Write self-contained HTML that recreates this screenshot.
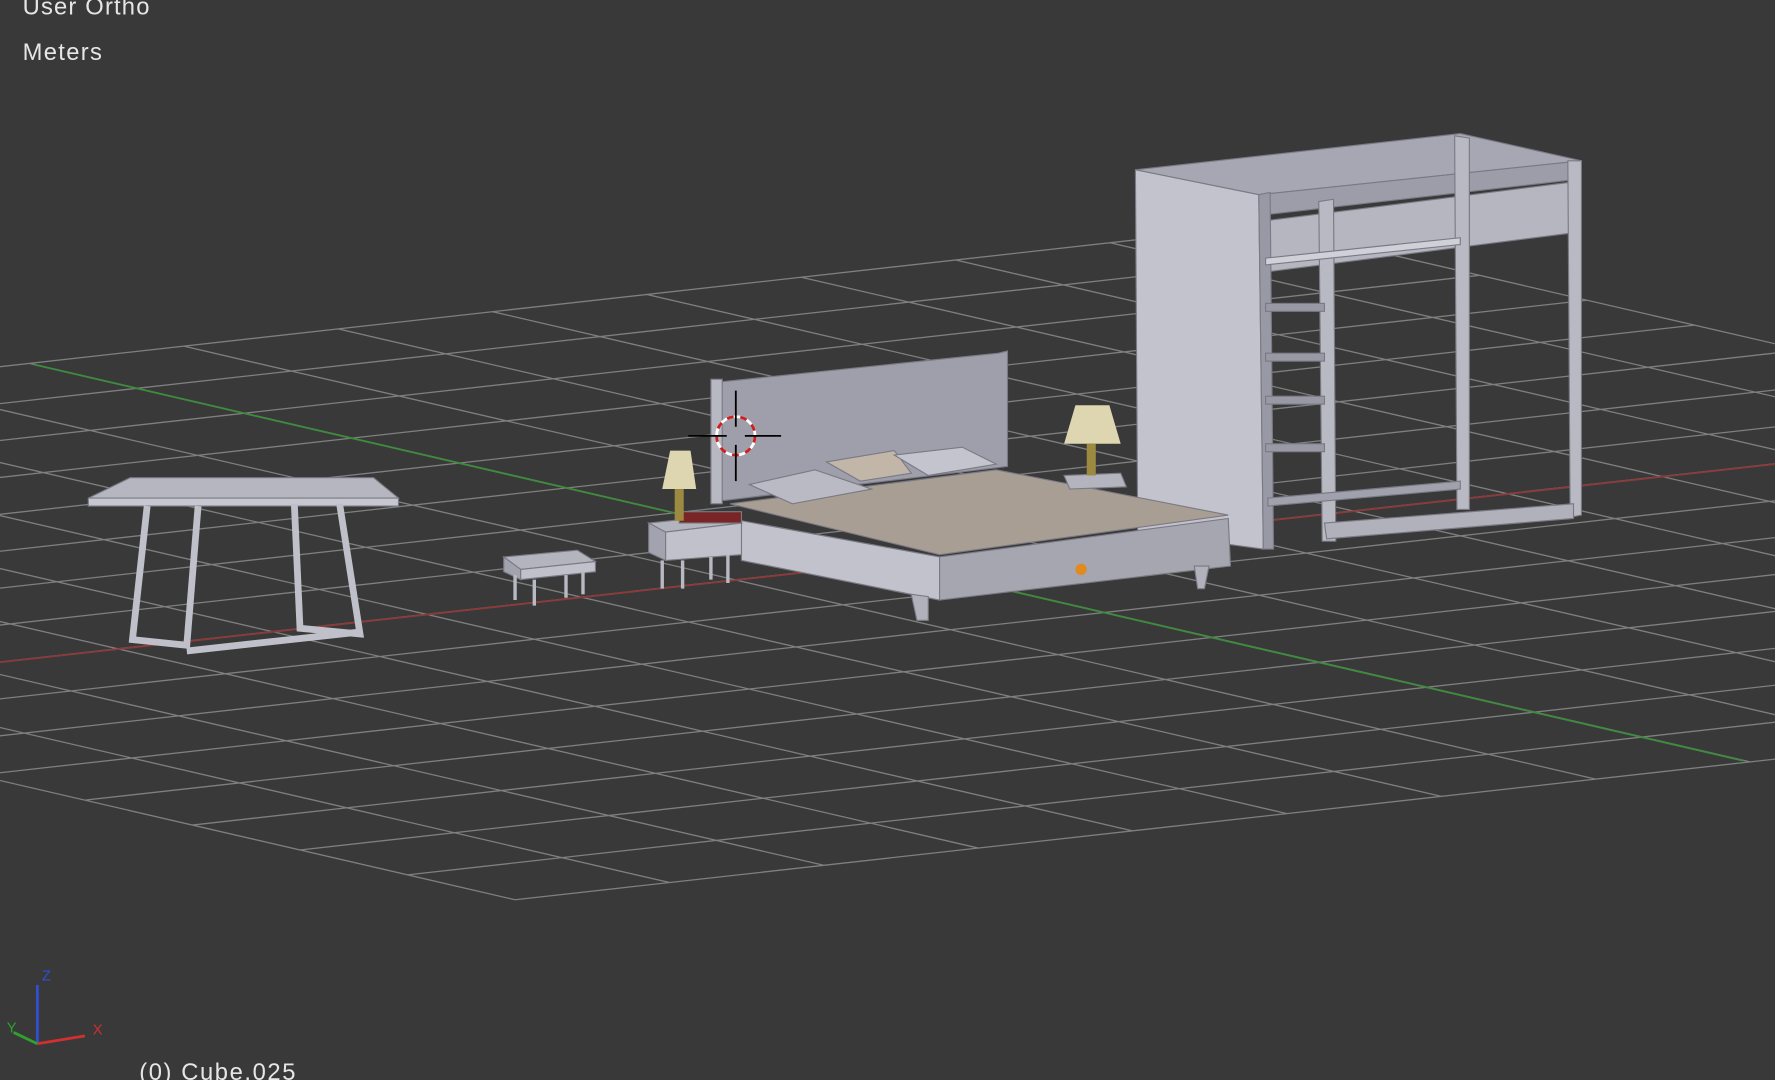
<!DOCTYPE html>
<html><head><meta charset="utf-8"><style>
html,body{margin:0;padding:0;background:#393939;overflow:hidden}
svg{display:block}
</style></head><body>
<svg width="1775" height="1080" viewBox="0 0 1568 954" preserveAspectRatio="none" xmlns="http://www.w3.org/2000/svg">
<rect width="1568" height="954" fill="#393939"/>
<g transform="matrix(136.375,-15.225,95,22,786,497)">
<path fill="none" stroke="#7f7f7f" stroke-width="1.3" vector-effect="non-scaling-stroke" d="
M-8,-8V8 M-7,-8V8 M-6,-8V8 M-5,-8V8 M-4,-8V8 M-3,-8V8 M-2,-8V8 M-1,-8V8 M0,-8V8 M1,-8V8 M2,-8V8 M3,-8V8 M4,-8V8 M5,-8V8 M6,-8V8 M7,-8V8 M8,-8V8
M-8,-8H8 M-8,-7H8 M-8,-6H8 M-8,-5H8 M-8,-4H8 M-8,-3H8 M-8,-2H8 M-8,-1H8 M-8,0H8 M-8,1H8 M-8,2H8 M-8,3H8 M-8,4H8 M-8,5H8 M-8,6H8 M-8,7H8 M-8,8H8"/>
</g>
<line x1="0" y1="585" x2="1568" y2="410" stroke="#8a3a3a" stroke-width="1.6"/>
<line x1="30" y1="322" x2="1540" y2="672" stroke="#3f8a3f" stroke-width="1.6"/>

<!-- loft bed / wardrobe -->
<g stroke="#7a7a85" stroke-width="1">
<polygon points="1003,150 1290,118 1397,142 1112,172" fill="#a6a7b2"/>
<polygon points="1112,172 1397,142 1397,158 1115,190" fill="#9c9da8"/>
<polygon points="1118,195 1395,160 1395,205 1120,240" fill="#b5b6c0"/>
<polygon points="1003,150 1112,172 1116,485 1005,470" fill="#c2c3cc"/>
<polygon points="1112,172 1122,170 1125,485 1116,485" fill="#9899a4"/>
<polygon points="1165,178 1178,176 1180,478 1168,478" fill="#b8b9c2"/>
<polygon points="1285,120 1298,122 1298,450 1287,450" fill="#b8b9c2"/>
<polygon points="1385,142 1397,142 1397,455 1387,457" fill="#b8b9c2"/>
<polygon points="1170,462 1390,445 1390,458 1172,476" fill="#b0b1ba"/>
<polygon points="1120,440 1290,425 1290,432 1120,447" fill="#a0a1ac"/>
<rect x="1118" y="268" width="52" height="7" fill="#9899a4"/>
<rect x="1118" y="312" width="52" height="7" fill="#9899a4"/>
<rect x="1118" y="350" width="52" height="7" fill="#9899a4"/>
<rect x="1118" y="392" width="52" height="7" fill="#9899a4"/>
<polygon points="1118,228 1290,210 1290,216 1118,234" fill="#cfd0d8"/>
</g>

<!-- bed -->
<g stroke="#7a7a85" stroke-width="1">
<polygon points="630,338 882,312 890,310 890,412 640,442 630,440" fill="#9e9fab"/>
<rect x="628" y="335" width="10" height="110" fill="#b7b8c2"/>
<polygon points="645,445 880,415 1085,455 830,490" fill="#a99e94"/>
<polygon points="662,428 720,415 770,432 700,445" fill="#b9bac4"/>
<polygon points="730,408 790,398 805,418 760,425" fill="#c2b6a8"/>
<polygon points="790,402 850,395 880,410 820,420" fill="#c3c4cd"/>
<polygon points="655,460 830,492 1085,458 1087,500 830,530 655,495" fill="#a5a6b0"/>
<polygon points="655,460 830,492 830,530 655,495" fill="#c1c2cb"/>
<polygon points="805,525 820,527 820,548 810,548" fill="#b0b1ba"/>
<polygon points="1055,500 1068,500 1064,520 1058,520" fill="#b0b1ba"/>
</g>
<circle cx="955" cy="503" r="5" fill="#e08a20"/>

<!-- nightstands & lamps -->
<g stroke="#7a7a85" stroke-width="1">
<polygon points="573,462 640,455 655,462 588,470" fill="#b3b4be"/>
<polygon points="573,462 588,470 588,495 573,488" fill="#a2a3ae"/>
<polygon points="588,470 655,462 655,490 588,495" fill="#c0c1ca"/>
<polygon points="940,420 990,418 995,430 945,432" fill="#b3b4be"/>
<rect x="600" y="452" width="55" height="10" fill="#7a2525"/>
</g>
<path d="M585,495 V520 M603,495 V520 M643,490 V515 M628,492 V512" stroke="#b8b9c2" stroke-width="3"/>
<polygon points="585,432 615,432 610,398 592,398" fill="#ddd6b0"/>
<rect x="596" y="432" width="8" height="28" fill="#9b8a40"/>
<polygon points="940,392 990,392 980,358 950,358" fill="#ddd6b0"/>
<rect x="960" y="392" width="8" height="28" fill="#9b8a40"/>

<!-- stool -->
<g stroke="#7a7a85" stroke-width="1">
<polygon points="445,492 510,486 526,496 460,503" fill="#b3b4be"/>
<polygon points="445,492 460,503 460,512 445,505" fill="#a2a3ae"/>
<polygon points="460,503 526,496 526,505 460,512" fill="#c0c1ca"/>
</g>
<path d="M455,508 V530 M472,512 V535 M500,508 V528 M515,505 V525" stroke="#b8b9c2" stroke-width="3"/>

<!-- table -->
<g stroke="#7a7a85" stroke-width="1">
<polygon points="78,440 115,422 330,422 352,440" fill="#b5b6c0"/>
<polygon points="78,440 352,440 352,447 78,447" fill="#c6c7d0"/>
</g>
<path d="M130,447 L117,565 L165,570 L175,447 M300,445 L318,560 L265,555 L260,445 M165,575 L320,558" stroke="#bfc0c9" stroke-width="6" fill="none"/>

<!-- 3D cursor -->
<circle cx="650" cy="385" r="17" fill="none" stroke="#fff" stroke-width="2.5"/>
<circle cx="650" cy="385" r="17" fill="none" stroke="#cc2020" stroke-width="2.5" stroke-dasharray="6 6"/>
<path d="M608,385 H642 M658,385 H690 M650,345 V377 M650,393 V425" stroke="#000" stroke-width="1.6"/>

<!-- axes widget -->
<path d="M33,922 V870" stroke="#3050d0" stroke-width="2.5"/>
<path d="M33,922 L75,915" stroke="#d03030" stroke-width="2.5"/>
<path d="M33,922 L12,912" stroke="#30a030" stroke-width="2.5"/>
<text x="37" y="866" font-family="Liberation Sans, sans-serif" font-size="13" fill="#3050d0">Z</text>
<text x="82" y="914" font-family="Liberation Sans, sans-serif" font-size="13" fill="#d03030">X</text>
<text x="6" y="912" font-family="Liberation Sans, sans-serif" font-size="13" fill="#30a030">Y</text>

<g font-family="Liberation Sans, DejaVu Sans, sans-serif" font-size="21" fill="#e6e6e6">
<text x="20" y="13" textLength="112">User Ortho</text>
<text x="20" y="53" textLength="70">Meters</text>
<text x="123" y="954" textLength="138">(0) Cube.025</text>
</g>
</svg>
</body></html>
